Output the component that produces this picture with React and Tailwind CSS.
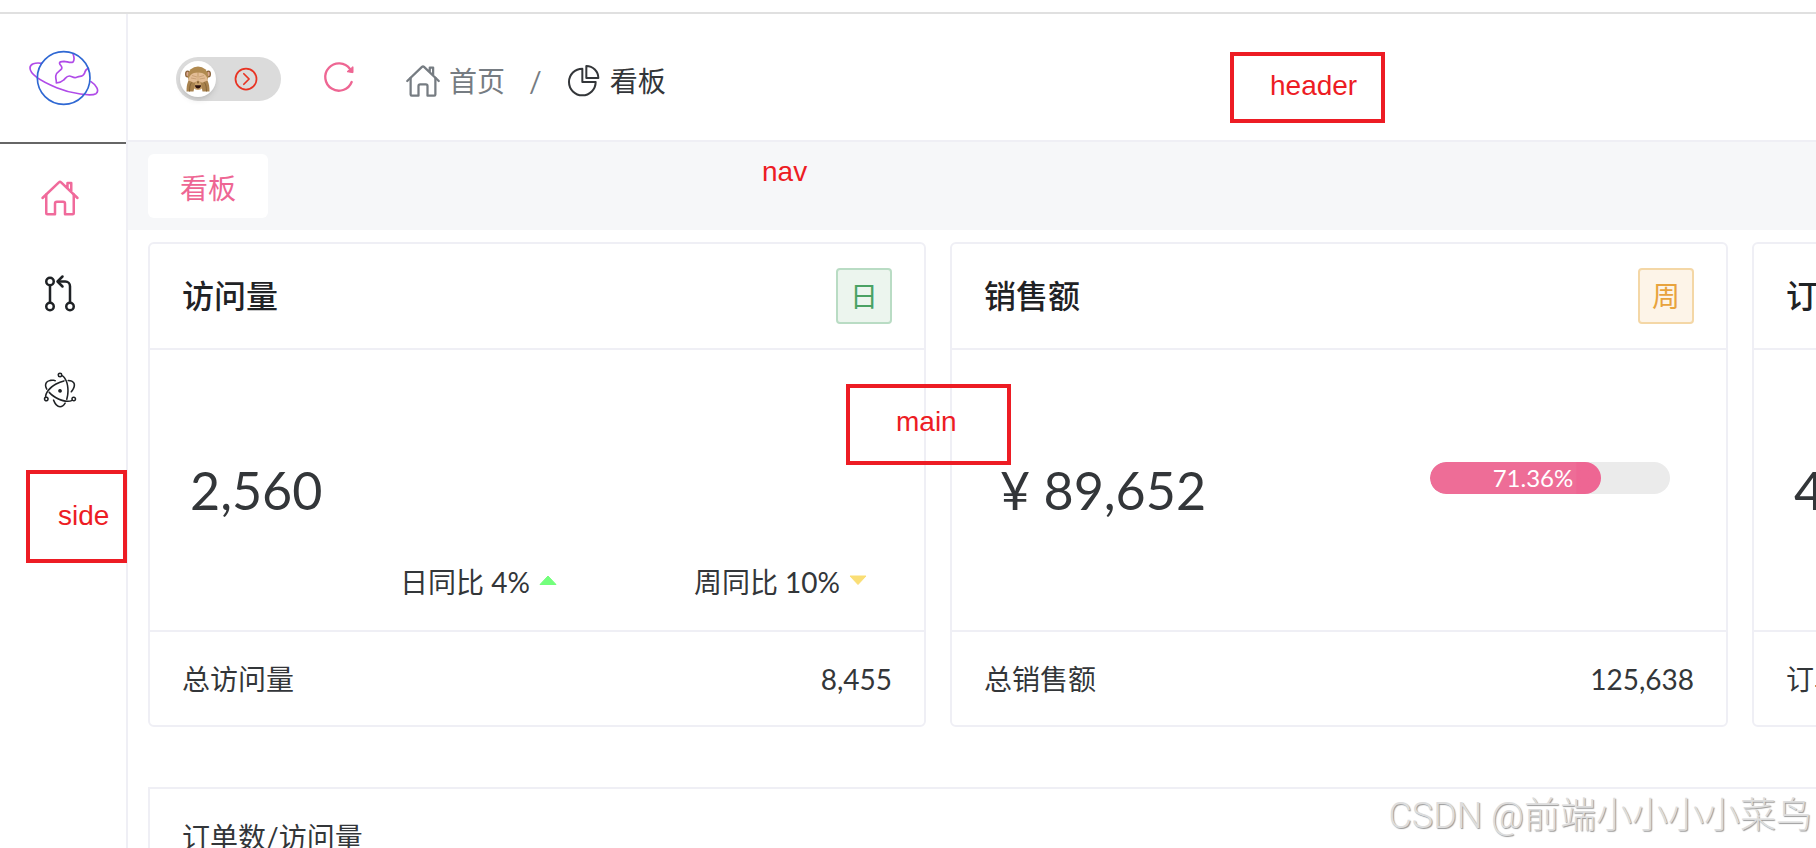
import React, { useState } from "react";
import {
  IoChevronForwardCircleOutline,
  IoGitPullRequestOutline,
  IoHomeOutline,
  IoLogoElectron,
} from "react-icons/io5";

const menus = [
  { key: "home", label: "首页", icon: IoHomeOutline },
  { key: "git", label: "仓库", icon: IoGitPullRequestOutline },
  { key: "electron", label: "应用", icon: IoLogoElectron },
];

const Logo = () => (
  <svg viewBox="82 144 216 180" className="w-18 h-15" fill="none" strokeWidth="5" strokeLinejoin="round" strokeLinecap="round">
    <path
      stroke="#b04be8"
      d="M126 190c-20-3-35 2-35 14 0 18 34 40 80 59s104 26 118 18c12-9-1-27-15-36M220 162c4 9 4 18 0 24-6 4-17-1-27-2-8 0-15 2-13 7 2 6 9 9 6 15-4 6-15 10-17 19-3 8 2 15 1 24 9-1 16-3 22-9 6-5 8-12 17-12 6 0 10 5 17 5 7-1 8-4 15-4 8 0 10-2 13-8 2-7 4-14 12-16"
    />
    <circle cx="192" cy="234" r="79" stroke="#2f68d3" />
  </svg>
);

const Monkey = () => (
  <svg viewBox="0 0 26 26" className="w-[26px] h-[26px]">
    <ellipse cx="2.6" cy="8" rx="2.6" ry="3.6" fill="#8a6238" />
    <ellipse cx="23.4" cy="8" rx="2.6" ry="3.6" fill="#8a6238" />
    <ellipse cx="2.6" cy="8" rx="1.3" ry="2.2" fill="#dba892" />
    <ellipse cx="23.4" cy="8" rx="1.3" ry="2.2" fill="#dba892" />
    <ellipse cx="13" cy="10" rx="10.3" ry="9.6" fill="#b08a50" />
    <ellipse cx="13" cy="17.500" rx="6.5" ry="6.4" fill="#c9a26c" />
    <path d="M1.500 25.500C1.500 19 2.600 14 6 12.500l4.500 3-2 10z" fill="#a8824e" />
    <path d="M24.500 25.500c0-6.500-1.100-11.500-4.500-13l-4.500 3 2 10z" fill="#a8824e" />
    <path d="M4.500 25.500c0-4 .5-7 2-9M21.500 25.500c0-4-.5-7-2-9" stroke="#7b5a2e" fill="none" strokeWidth=".8" />
    <path d="M3.500 14.500C3.500 10 7 6.500 12.700 6.500v8L9 16.800z" fill="#e3bd95" />
    <path d="M22.500 14.500c0-4.500-3.500-8-9.200-8v8l3.700 2.300z" fill="#e3bd95" />
    <path d="M7 9.500l5 1.500M6 12l5.500 1M19 9.500L14 11M20 12l-5.500 1" stroke="#b98d63" strokeWidth=".6" />
    <path d="M12 15.500l1 2.500 1-2.500z" fill="#6a4520" />
    <path d="M10 19.300h6c0 2-1.200 3.200-3 3.200s-3-1.200-3-3.200z" fill="#2a100c" />
  </svg>
);

const Reload = () => (
  <svg viewBox="964 177 108 108" className="w-9 h-9">
    <path d="M1051 207A41 41 0 1 0 1056 246" fill="none" stroke="currentColor" strokeWidth="7" strokeLinecap="round" />
    <path d="M1060 200v18l-18-3z" fill="currentColor" stroke="currentColor" strokeWidth="3" strokeLinejoin="round" />
  </svg>
);

const Pie = () => (
  <svg viewBox="526 70 108 108" className="w-9 h-9" fill="none" stroke="currentColor" strokeWidth="6" strokeLinejoin="round">
    <path d="M575 87v40h40a40 40 0 1 1-40-40z" />
    <path d="M587 79v36h36a36 36 0 0 0-36-36z" />
  </svg>
);

const Caret = ({ up }) => (
  <svg viewBox="0 0 28 28" className="w-7 h-7 shrink-0">
    {up ? (
      <path d="M6 16.500L14 8l8 8.500z" fill="#73ff7c" stroke="#73ff7c" strokeLinejoin="round" />
    ) : (
      <path d="M6 8h16l-8 8.500z" fill="#fade75" stroke="#fade75" strokeLinejoin="round" />
    )}
  </svg>
);

const Card = ({ title, tag, tagClass, children, label, total }) => (
  <section className="w-[778px] shrink-0 rounded-md border-2 border-[#efeff5] text-[28px] leading-10">
    <div className="flex h-26 items-center justify-between px-8">
      <h2 className="text-[32px] font-medium text-[#1f2225]">{title}</h2>
      <span className={`flex w-14 h-14 items-center justify-center rounded-sm border-2 ${tagClass}`}>{tag}</span>
    </div>
    <div className="h-71 border-y-2 border-[#efeff5] px-10">{children}</div>
    <div className="flex h-[93px] items-center justify-between px-8">
      <span>{label}</span>
      <span>{total}</span>
    </div>
  </section>
);

const Progress = ({ value }) => (
  <div className="h-8 w-60 overflow-hidden rounded-full bg-[#ebebeb]">
    <div
      className="h-full rounded-full bg-linear-to-r from-[#ee6d97] from-85% to-[#ee6693] to-86% px-7 text-right text-2xl leading-8 text-white"
      style={{ width: `${value}%` }}
    >
      {value}%
    </div>
  </div>
);

const App = () => {
  const [active, setActive] = useState("home");
  const [dark, setDark] = useState(false);

  return (
    <div className="relative h-screen overflow-hidden bg-white pt-3 font-['Lato','Noto_Sans_CJK_SC',sans-serif] text-[#333639]">
      <div className="flex h-full border-t-2 border-[#e0e0e0]">
        <aside className="w-32 shrink-0 border-r-2 border-[#efeff5]">
          <div className="flex h-[130px] items-center justify-center border-b-2 border-[#666666]">
            <Logo />
          </div>
          <nav className="flex flex-col gap-14 pt-[34px] pl-10">
            {menus.map(({ key, label, icon: Icon }) => (
              <button
                key={key}
                aria-label={label}
                onClick={() => setActive(key)}
                className={`w-10 h-10 text-[40px] ${active === key ? "text-[#f06a9b]" : "text-[#1f2225]"}`}
              >
                <Icon />
              </button>
            ))}
          </nav>
        </aside>

        <div className="min-w-0 flex-1">
          <header className="flex h-32 items-center border-b-2 border-[#efeff5] pl-12 pt-1">
            <label className="flex h-11 w-[105px] items-center gap-4 rounded-full bg-[#dbdbdb] pl-1">
              <input
                type="checkbox"
                aria-label="主题"
                className="sr-only"
                checked={dark}
                onChange={() => setDark(!dark)}
              />
              <span className="flex w-9 h-9 items-center justify-center rounded-full bg-white shadow-md">
                <Monkey />
              </span>
              <IoChevronForwardCircleOutline className="w-7 h-7 text-[#e83323]" />
            </label>
            <button aria-label="刷新" className="ml-10 pb-1 text-[#ee6693]">
              <Reload />
            </button>
            <nav className="ml-12 flex items-center pt-1 text-[28px] leading-10 text-[#767c82]">
              <a href="#home" className="flex items-center gap-2">
                <IoHomeOutline className="w-9 h-9" />
                首页
              </a>
              <span className="mx-6">/</span>
              <a href="#board" className="flex items-center gap-2 text-[#333639]">
                <Pie />
                看板
              </a>
            </nav>
          </header>

          <div className="h-22 bg-[#f6f7f9] px-5 py-3">
            <button className="h-16 rounded-md bg-white px-8 pt-1 text-[28px] text-[#ee6693]">看板</button>
          </div>

          <main className="px-5 pt-3">
            <div className="flex gap-6">
              <Card
                title="访问量"
                tag="日"
                tagClass="border-[#b9dcc4] bg-[#ecf5ee] text-[#4aa264]"
                label="总访问量"
                total="8,455"
              >
                <div className="flex h-full flex-col justify-end gap-10 pb-7">
                  <div className="text-[52px] leading-16">2,560</div>
                  <div className="flex justify-end gap-33 pr-3">
                    <span className="flex items-center gap-1">
                      日同比 4% <Caret up />
                    </span>
                    <span className="flex items-center gap-1">
                      周同比 10% <Caret />
                    </span>
                  </div>
                </div>
              </Card>
              <Card
                title="销售额"
                tag="周"
                tagClass="border-[#f4d7a6] bg-[#fdf4e8] text-[#e8a33d]"
                label="总销售额"
                total="125,638"
              >
                <div className="flex h-full items-center justify-between pl-2 pr-4">
                  <div className="text-[52px] leading-16">¥ 89,652</div>
                  <div className="pb-6">
                    <Progress value={71.36} />
                  </div>
                </div>
              </Card>
              <Card
                title="订单量"
                tag="月"
                tagClass="border-[#b9dcc4] bg-[#ecf5ee] text-[#4aa264]"
                label="订单总量"
                total="8,455"
              >
                <div className="flex h-full items-center text-[52px] leading-16">4,560</div>
              </Card>
            </div>

            <section className="mt-15 w-[2382px] border-2 border-[#efeff5] px-8 py-7 text-[28px] leading-10">
              订单数/访问量
            </section>
          </main>
        </div>
      </div>

      {/* 区域标注 */}
      <div className="absolute left-[1230px] top-13 h-[71px] w-[155px] border-4 border-[#ed1c24] pl-9 pt-1.5 font-['Liberation_Sans',sans-serif] text-[28px] leading-12 text-[#ed1c24]">
        header
      </div>
      <div className="absolute left-[762px] top-37 font-['Liberation_Sans',sans-serif] text-[28px] leading-12 text-[#ed1c24]">
        nav
      </div>
      <div className="absolute left-[846px] top-96 h-[81px] w-[165px] border-4 border-[#ed1c24] pl-11.5 pt-2.5 font-['Liberation_Sans',sans-serif] text-[28px] leading-12 text-[#ed1c24]">
        main
      </div>
      <div className="absolute left-[26px] top-[470px] h-[93px] w-[101px] border-4 border-[#ed1c24] pl-7 pt-4.5 font-['Liberation_Sans',sans-serif] text-[28px] leading-12 text-[#ed1c24]">
        side
      </div>

      <div className="absolute right-1 bottom-2 font-['Roboto','Noto_Sans_CJK_SC',sans-serif] text-4xl font-light leading-12 text-[#dddddd] [text-shadow:1px_1px_1px_#999999]">
        CSDN @前端小小小小菜鸟
      </div>
    </div>
  );
};

export default App;
